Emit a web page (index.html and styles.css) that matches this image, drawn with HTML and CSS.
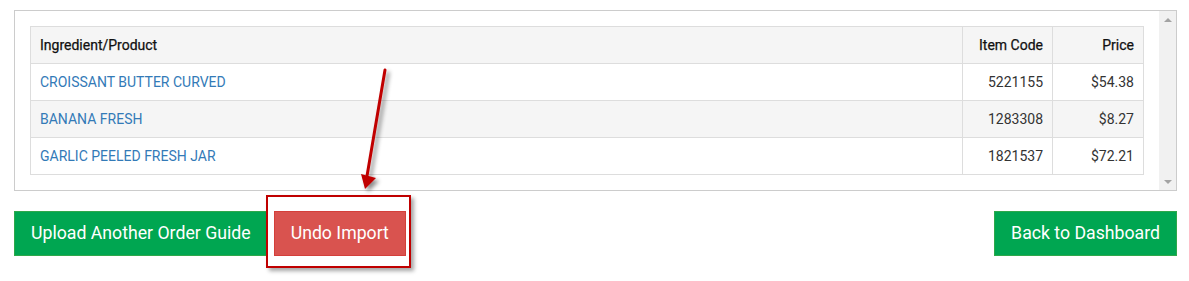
FILE: index.html
```html
<!DOCTYPE html>
<html lang="en">
<head>
  <meta charset="UTF-8">
  <title>Order Guide Import</title>
  <link rel="stylesheet" href="styles.css">
</head>
<body>
  <div class="page">
    <!-- Imported items -->
    <div class="results-box">
      <div class="results-inner">
        <table class="items">
          <thead>
            <tr>
              <th>Ingredient/Product</th>
              <th class="num code-col">Item Code</th>
              <th class="num price-col">Price</th>
            </tr>
          </thead>
          <tbody>
            <tr>
              <td><a href="#">CROISSANT BUTTER CURVED</a></td>
              <td class="num">5221155</td>
              <td class="num">$54.38</td>
            </tr>
            <tr>
              <td><a href="#">BANANA FRESH</a></td>
              <td class="num">1283308</td>
              <td class="num">$8.27</td>
            </tr>
            <tr>
              <td><a href="#">GARLIC PEELED FRESH JAR</a></td>
              <td class="num">1821537</td>
              <td class="num">$72.21</td>
            </tr>
          </tbody>
        </table>
      </div>
      <div class="scrollbar">
        <span class="arrow-up"></span>
        <span class="arrow-down"></span>
      </div>
    </div>

    <!-- Actions -->
    <div class="actions">
      <div class="actions-left">
        <a href="#" class="btn btn-green">Upload Another Order Guide</a>
        <a href="#" class="btn btn-red">Undo Import</a>
      </div>
      <a href="#" class="btn btn-green">Back to Dashboard</a>
    </div>

    <!-- Annotation -->
    <div class="highlight"></div>
    <svg class="pointer" width="60" height="140" viewBox="0 0 60 140">
      <defs>
        <filter id="shadow" x="-50%" y="-20%" width="200%" height="140%">
          <feDropShadow dx="3" dy="3" stdDeviation="2" flood-color="#000" flood-opacity="0.45"/>
        </filter>
      </defs>
      <g filter="url(#shadow)">
        <line x1="45" y1="10" x2="27" y2="116" stroke="#c00000" stroke-width="3" stroke-linecap="round"/>
        <polygon points="21,114 36,118 25,129" fill="#c00000"/>
      </g>
    </svg>
  </div>
</body>
</html>
```

FILE: styles.css
```css
* {
  box-sizing: border-box;
}

body {
  margin: 0;
  min-height: 100vh;
  font-family: Roboto, "Liberation Sans", sans-serif;
  color: #333333;
  background: #ffffff;
}

.page {
  position: relative;
  min-height: 281px;
  padding: 10px 12px 0 14px;
}

/* Resultados */
.results-box {
  display: flex;
  border: 1px solid #cccccc;
}

.results-inner {
  flex: 1;
  padding: 15px;
}

.items {
  width: 100%;
  border-collapse: collapse;
  font-size: 14px;
}

.items th,
.items td {
  border: 1px solid #dddddd;
  padding: 8px 9px;
  line-height: 20px;
  text-align: left;
}

.items th {
  font-weight: normal;
  background: #f5f5f5;
  color: #111111;
  -webkit-text-stroke: 0.25px #111111;
}

.items tbody tr:nth-child(even) td {
  background: #f5f5f5;
}

.items td a {
  color: #337ab7;
  text-decoration: none;
}

.items .num {
  text-align: right;
}

.code-col {
  width: 90px;
}

.price-col {
  width: 91px;
}

.scrollbar {
  width: 17px;
  background: #f1f1f1;
  display: flex;
  flex-direction: column;
  justify-content: space-between;
  align-items: center;
  padding: 7px 0 6px;
}

.arrow-up {
  width: 0;
  height: 0;
  border-left: 4px solid transparent;
  border-right: 4px solid transparent;
  border-bottom: 4px solid #a3a3a3;
}

.arrow-down {
  width: 0;
  height: 0;
  border-left: 4px solid transparent;
  border-right: 4px solid transparent;
  border-top: 4px solid #a3a3a3;
}

/* Botões */
.actions {
  display: flex;
  justify-content: space-between;
  margin-top: 20px;
}

.actions-left {
  display: flex;
  gap: 6px;
}

.btn {
  display: inline-block;
  font-size: 17.7px;
  font-weight: normal;
  line-height: 23px;
  padding: 10px 16px;
  border: 1px solid transparent;
  color: #ffffff;
  text-decoration: none;
}

.btn-green {
  background: #00a651;
  border-color: #2ea84a;
}

.btn-red {
  background: #d9534f;
  border-color: #d43f3a;
}

/* Anotação */
.highlight {
  position: absolute;
  left: 266px;
  top: 195px;
  width: 145px;
  height: 73px;
  border: 2px solid #c00000;
  box-shadow: 3px 3px 4px rgba(0, 0, 0, 0.35);
}

.pointer {
  position: absolute;
  left: 340px;
  top: 60px;
}
```
